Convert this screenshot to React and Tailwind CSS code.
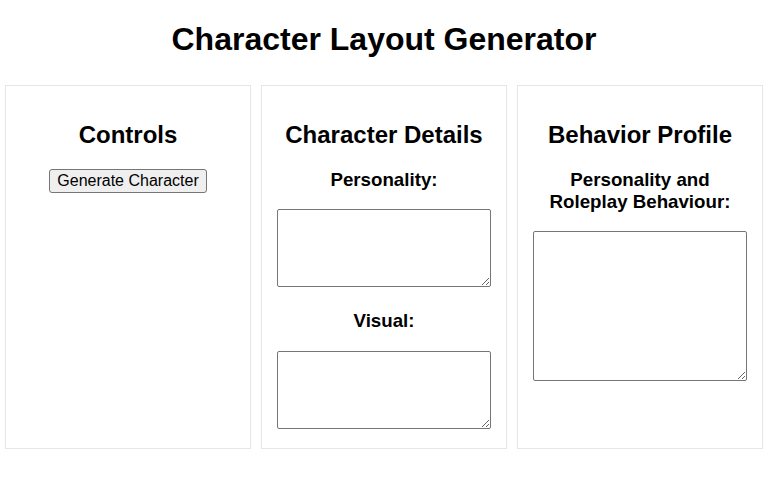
export default function App() {
  const font = { fontFamily: '"Liberation Sans", Arial, sans-serif' };
  const ta = "w-full h-[78px] border border-[#767676] rounded-[2px] p-[2px] bg-white align-baseline";
  return (
    <div className="text-black bg-white text-[16px] leading-[normal]" style={font}>
      <h1 className="text-[32px] font-bold text-center my-[21.44px] leading-[normal]">Character Layout Generator</h1>
      <div className="flex">
        <div className="flex-1 m-[5px] border border-[#e6e6e6] p-[15px] text-center">
          <h2 className="text-[24px] font-bold my-[19.92px] leading-[normal]">Controls</h2>
          <button className="text-[16px] bg-[#efefef] border border-[#767676] rounded-[3px] px-[7px] py-[2px] leading-[normal]">Generate Character</button>
        </div>
        <div className="flex-1 m-[5px] border border-[#e6e6e6] p-[15px] text-center">
          <h2 className="text-[24px] font-bold my-[19.92px] leading-[normal]">Character Details</h2>
          <h3 className="text-[18.72px] font-bold my-[18.72px] leading-[normal]">Personality:</h3>
          <div><textarea className={ta}></textarea></div>
          <h3 className="text-[18.72px] font-bold my-[18.72px] leading-[normal]">Visual:</h3>
          <div><textarea className={ta}></textarea></div>
        </div>
        <div className="flex-1 m-[5px] border border-[#e6e6e6] p-[15px] text-center">
          <h2 className="text-[24px] font-bold my-[19.92px] leading-[normal]">Behavior Profile</h2>
          <h3 className="text-[18.72px] font-bold my-[18.72px] leading-[normal]">Personality and<br />Roleplay Behaviour:</h3>
          <div><textarea className="w-full h-[150px] border border-[#767676] rounded-[2px] p-[2px] bg-white align-baseline"></textarea></div>
        </div>
      </div>
    </div>
  );
}
